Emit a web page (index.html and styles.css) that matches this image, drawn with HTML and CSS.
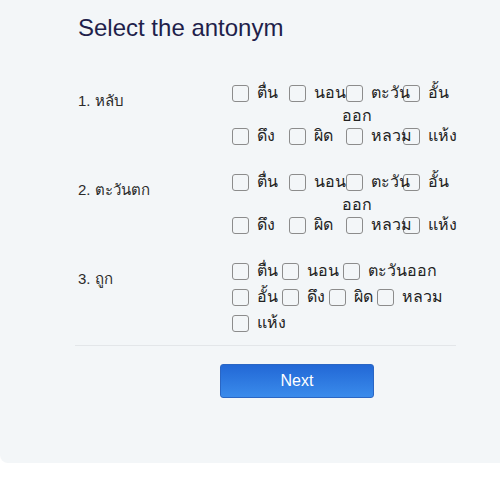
FILE: index.html
```html
<!DOCTYPE html>
<html lang="en">

<head>
    <meta charset="UTF-8">
    <meta name="viewport" content="width=device-width, initial-scale=1.0">
    <title>Antonym Quiz</title>
    <link rel="stylesheet" href="styles.css">
</head>

<body>
    <div class="panel">
        <div class="quiz">
            <h2 class="quiz-title">Select the antonym</h2>

            <div class="question">
                <div class="q-label">1. หลับ</div>
                <div class="options grid">
                    <label class="opt"><input type="checkbox"><span>ตื่น</span></label>
                    <label class="opt"><input type="checkbox"><span>นอน</span></label>
                    <label class="opt"><input type="checkbox"><span>ตะวันออก</span></label>
                    <label class="opt"><input type="checkbox"><span>อั้น</span></label>
                    <label class="opt"><input type="checkbox"><span>ดึง</span></label>
                    <label class="opt"><input type="checkbox"><span>ผิด</span></label>
                    <label class="opt"><input type="checkbox"><span>หลวม</span></label>
                    <label class="opt"><input type="checkbox"><span>แห้ง</span></label>
                </div>
            </div>

            <div class="question">
                <div class="q-label">2. ตะวันตก</div>
                <div class="options grid">
                    <label class="opt"><input type="checkbox"><span>ตื่น</span></label>
                    <label class="opt"><input type="checkbox"><span>นอน</span></label>
                    <label class="opt"><input type="checkbox"><span>ตะวันออก</span></label>
                    <label class="opt"><input type="checkbox"><span>อั้น</span></label>
                    <label class="opt"><input type="checkbox"><span>ดึง</span></label>
                    <label class="opt"><input type="checkbox"><span>ผิด</span></label>
                    <label class="opt"><input type="checkbox"><span>หลวม</span></label>
                    <label class="opt"><input type="checkbox"><span>แห้ง</span></label>
                </div>
            </div>

            <div class="question">
                <div class="q-label">3. ถูก</div>
                <div class="options flow"><label class="opt"><input type="checkbox"><span>ตื่น</span></label><label class="opt"><input type="checkbox"><span>นอน</span></label><label class="opt"><input type="checkbox"><span>ตะวันออก</span></label><label class="opt"><input type="checkbox"><span>อั้น</span></label><label class="opt"><input type="checkbox"><span>ดึง</span></label><label class="opt"><input type="checkbox"><span>ผิด</span></label><label class="opt"><input type="checkbox"><span>หลวม</span></label><label class="opt"><input type="checkbox"><span>แห้ง</span></label></div>
            </div>

            <hr class="divider">

            <button class="next-btn">Next</button>
        </div>
    </div>
</body>

</html>
```

FILE: styles.css
```css
body {
    margin: 0;
    background-color: #fff;
    font-family: "Liberation Sans", Arial, sans-serif;
}

.panel {
    background-color: #f3f6f8;
    height: 463px;
    border-bottom-left-radius: 8px;
    overflow: hidden;
}

.quiz {
    width: 381px;
    margin-left: 75px;
    padding-top: 14px;
}

.quiz-title {
    margin: 0 0 0 3px;
    font-size: 24px;
    font-weight: normal;
    line-height: 28px;
    color: #1f1f4b;
}

.question {
    display: grid;
    grid-template-columns: 153px 228px;
    margin-top: 39px;
}

.question + .question {
    margin-top: 20px;
}

.q-label {
    padding: 8px 0 0 3px;
    font-size: 15px;
    color: #2b2b2b;
}

.options {
    font-size: 16px;
    line-height: 17px;
    color: #222;
}

.options.grid {
    display: grid;
    grid-template-columns: repeat(4, 57px);
}

.opt {
    white-space: nowrap;
}

.opt span {
    position: relative;
    white-space: normal;
    padding-left: 5px;
}

.opt input {
    appearance: none;
    box-sizing: border-box;
    width: 17px;
    height: 17px;
    margin: 4px 3px 5px 4px;
    border: 1.5px solid #8c8c8c;
    border-radius: 3px;
    background: transparent;
    vertical-align: middle;
}

.grid .opt {
    display: block;
}

.divider {
    border: none;
    border-top: 1px solid #e3e6e9;
    margin: 8px 0 0 0;
}

.next-btn {
    display: block;
    width: 154px;
    height: 34px;
    margin: 18px 0 0 145px;
    background: linear-gradient(#2268d6, #3a8beb);
    border: 1px solid #2a66c4;
    border-radius: 3px;
    color: #fff;
    font-family: "Liberation Sans", Arial, sans-serif;
    font-size: 16px;
}
```
